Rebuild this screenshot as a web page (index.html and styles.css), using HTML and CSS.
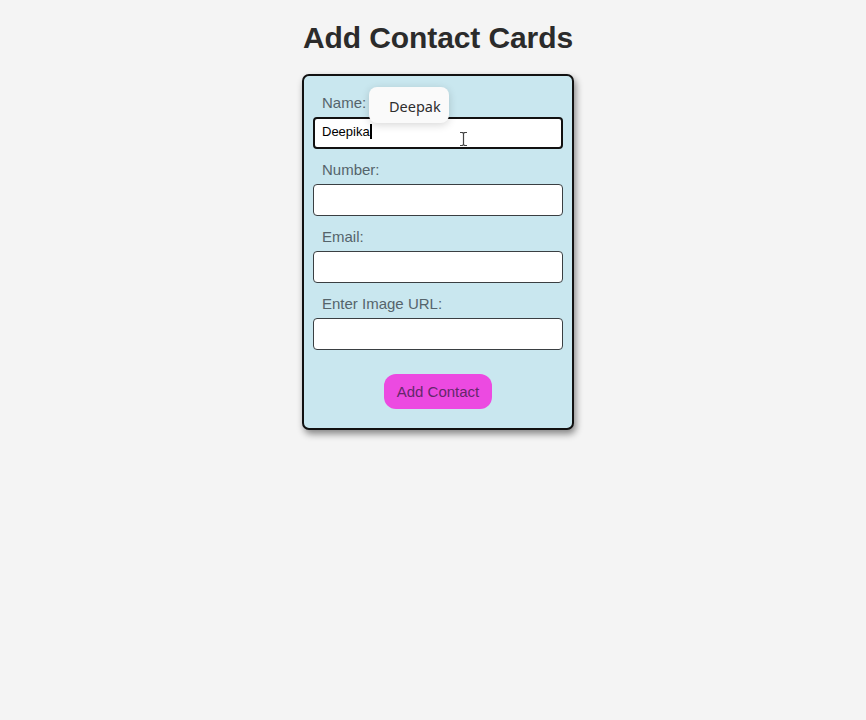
FILE: index.html
```html
<!DOCTYPE html>
<html lang="en">
<head>
<meta charset="utf-8">
<title>Add Contact Cards</title>
<link rel="stylesheet" href="styles.css">
</head>
<body>
<div class="page">
  <h1 class="title">Add Contact Cards</h1>
  <form class="card">
    <div class="field">
      <label class="label">Name:</label>
      <div class="input focused"><span class="value">Deepika</span><span class="caret"></span></div>
    </div>
    <div class="field">
      <label class="label">Number:</label>
      <input class="input" type="text">
    </div>
    <div class="field">
      <label class="label">Email:</label>
      <input class="input" type="text">
    </div>
    <div class="field last">
      <label class="label">Enter Image URL:</label>
      <input class="input" type="text">
    </div>
    <div class="actions">
      <button type="button" class="btn">Add Contact</button>
    </div>
    <div class="suggest">Deepak</div>
    <svg class="ibeam" width="9" height="16" viewBox="0 0 9 16">
      <path d="M1 1.5h2.5l1 1 1-1H8M4.5 2.5v11M1 14.5h2.5l1-1 1 1H8" fill="none" stroke="#444" stroke-width="1.2"/>
    </svg>
  </form>
</div>
</body>
</html>
```

FILE: styles.css
```css
html, body {
  margin: 0;
  padding: 0;
  background: #f4f4f4;
  font-family: "Liberation Sans", Arial, sans-serif;
}

.page {
  display: flex;
  flex-direction: column;
  align-items: center;
  padding-left: 10px;
  padding-bottom: 40px;
}

.title {
  margin: 21px 0 19px;
  font-size: 30px;
  line-height: 34px;
  font-weight: bold;
  color: #2b2b2b;
  letter-spacing: -0.1px;
}

.card {
  position: relative;
  box-sizing: content-box;
  width: 250px;
  padding: 18px 9px 19px;
  background: #c9e7ef;
  border: 2px solid #111;
  border-radius: 7px;
  box-shadow: 2px 4px 7px rgba(0, 0, 0, 0.45);
}

.field {
  display: flex;
  flex-direction: column;
  margin-bottom: 12px;
}

.field.last {
  margin-bottom: 13px;
}

.label {
  display: block;
  padding-left: 9px;
  margin-bottom: 6px;
  font-size: 15px;
  line-height: 17px;
  color: #55646b;
}

.input {
  box-sizing: border-box;
  width: 250px;
  height: 32px;
  margin: 0;
  padding: 0 8px;
  background: #fff;
  border: 1px solid #3a3f42;
  border-radius: 4px;
  font-family: "Liberation Sans", Arial, sans-serif;
  font-size: 13px;
  outline: none;
}

.input.focused {
  display: flex;
  align-items: center;
  border: 2px solid #111;
  padding: 0 7px 3px;
  color: #000;
}

.caret {
  display: inline-block;
  width: 2px;
  height: 15px;
  background: #000;
}

.actions {
  display: flex;
  justify-content: center;
  padding-top: 11px;
}

.btn {
  width: 108px;
  height: 35px;
  border: none;
  border-radius: 12px;
  background: #ec4ae1;
  color: #64286a;
  font-family: "Liberation Sans", Arial, sans-serif;
  font-size: 15px;
  padding: 0;
}

.suggest {
  position: absolute;
  left: 65px;
  top: 11px;
  width: 80px;
  height: 36px;
  box-sizing: border-box;
  padding-left: 20px;
  padding-top: 1px;
  background: #fafafa;
  border-radius: 8px;
  box-shadow: 0 2px 8px rgba(0, 0, 0, 0.16);
  font-family: "Noto Sans", "Open Sans", sans-serif;
  font-size: 14.5px;
  line-height: 36px;
  color: #2e2e2e;
}

.ibeam {
  position: absolute;
  left: 155px;
  top: 55px;
}
```
